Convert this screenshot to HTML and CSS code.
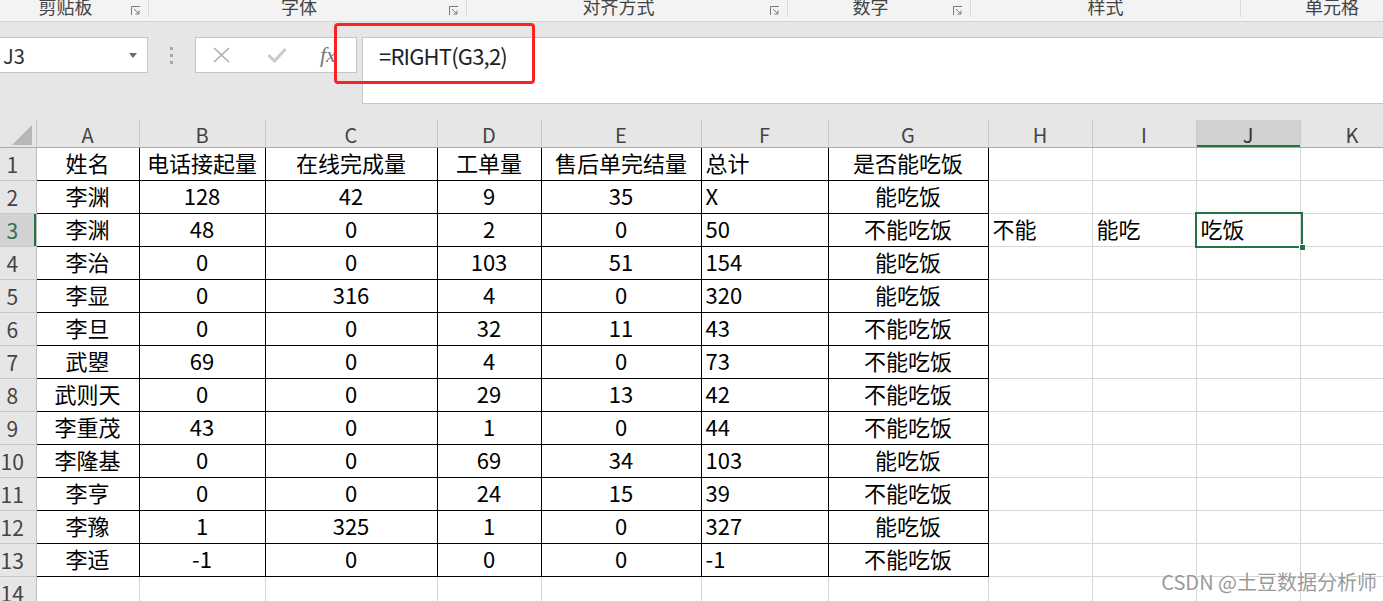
FILE: index.html
```html
<!DOCTYPE html>
<html lang="zh-CN">
<head>
    <meta charset="UTF-8">
    <title>RIGHT函数</title>
    <link rel="stylesheet" href="styles.css">
</head>
<body>
    <!-- 功能区底部的分组标题 -->
    <div class="ribbon">
        <div class="group g1"><span class="glabel">剪贴板</span><svg class="launcher" width="9" height="9"><path d="M0.5 9V0.5H9" /><path d="M3 3L8 8M8 4.5V8H4.5" /></svg></div>
        <div class="group g2"><span class="glabel">字体</span><svg class="launcher" width="9" height="9"><path d="M0.5 9V0.5H9" /><path d="M3 3L8 8M8 4.5V8H4.5" /></svg></div>
        <div class="group g3"><span class="glabel">对齐方式</span><svg class="launcher" width="9" height="9"><path d="M0.5 9V0.5H9" /><path d="M3 3L8 8M8 4.5V8H4.5" /></svg></div>
        <div class="group g4"><span class="glabel">数字</span><svg class="launcher" width="9" height="9"><path d="M0.5 9V0.5H9" /><path d="M3 3L8 8M8 4.5V8H4.5" /></svg></div>
        <div class="group g5"><span class="glabel">样式</span></div>
        <div class="group g6"><span class="glabel">单元格</span></div>
    </div>

    <!-- 名称框 + 编辑栏 -->
    <div class="fbar">
        <div class="namebox"><span>J3</span><svg width="8" height="5"><path d="M0 0H8L4 5Z" fill="#6b6b6b" /></svg></div>
        <div class="grip"><i></i><i></i><i></i></div>
        <div class="fnbox">
            <svg class="ico-x" width="17" height="16"><path d="M1 1L16 15M16 1L1 15" /></svg>
            <svg class="ico-ok" width="20" height="16"><path d="M1.5 8L7.5 14L18.5 2" /></svg>
            <span class="fx">fx</span>
        </div>
        <div class="finput">=RIGHT(G3,2)</div>
        <div class="mark"></div>
    </div>

    <div class="sheet">
        <table class="grid">
            <colgroup>
                <col class="w-rh"><col class="w-a"><col class="w-b"><col class="w-c"><col class="w-d"><col class="w-e"><col class="w-f"><col class="w-g"><col class="w-h"><col class="w-h"><col class="w-h"><col class="w-h">
            </colgroup>
            <thead>
                <tr>
                    <th class="corner"><svg width="36" height="26"><path d="M12 24L32 4V24Z" fill="#b7b7b7" /></svg></th>
                    <th class="ch">A</th><th class="ch">B</th><th class="ch">C</th><th class="ch">D</th><th class="ch">E</th><th class="ch">F</th><th class="ch">G</th><th class="ch">H</th><th class="ch">I</th><th class="ch on">J</th><th class="ch">K</th>
                </tr>
            </thead>
            <tbody>
                <tr><th class="rh">1</th><td class="t">姓名</td><td class="t">电话接起量</td><td class="t">在线完成量</td><td class="t">工单量</td><td class="t">售后单完结量</td><td class="t">总计</td><td class="t">是否能吃饭</td><td></td><td></td><td></td><td></td></tr>
                <tr><th class="rh">2</th><td class="t">李渊</td><td class="t">128</td><td class="t">42</td><td class="t">9</td><td class="t">35</td><td class="t">X</td><td class="t">能吃饭</td><td></td><td></td><td></td><td></td></tr>
                <tr><th class="rh on">3</th><td class="t">李渊</td><td class="t">48</td><td class="t">0</td><td class="t">2</td><td class="t">0</td><td class="t">50</td><td class="t">不能吃饭</td><td class="l">不能</td><td class="l">能吃</td><td class="l active">吃饭<div class="sel"><span class="handle"></span></div></td><td></td></tr>
                <tr><th class="rh">4</th><td class="t">李治</td><td class="t">0</td><td class="t">0</td><td class="t">103</td><td class="t">51</td><td class="t">154</td><td class="t">能吃饭</td><td></td><td></td><td></td><td></td></tr>
                <tr><th class="rh">5</th><td class="t">李显</td><td class="t">0</td><td class="t">316</td><td class="t">4</td><td class="t">0</td><td class="t">320</td><td class="t">能吃饭</td><td></td><td></td><td></td><td></td></tr>
                <tr><th class="rh">6</th><td class="t">李旦</td><td class="t">0</td><td class="t">0</td><td class="t">32</td><td class="t">11</td><td class="t">43</td><td class="t">不能吃饭</td><td></td><td></td><td></td><td></td></tr>
                <tr><th class="rh">7</th><td class="t">武曌</td><td class="t">69</td><td class="t">0</td><td class="t">4</td><td class="t">0</td><td class="t">73</td><td class="t">不能吃饭</td><td></td><td></td><td></td><td></td></tr>
                <tr><th class="rh">8</th><td class="t">武则天</td><td class="t">0</td><td class="t">0</td><td class="t">29</td><td class="t">13</td><td class="t">42</td><td class="t">不能吃饭</td><td></td><td></td><td></td><td></td></tr>
                <tr><th class="rh">9</th><td class="t">李重茂</td><td class="t">43</td><td class="t">0</td><td class="t">1</td><td class="t">0</td><td class="t">44</td><td class="t">不能吃饭</td><td></td><td></td><td></td><td></td></tr>
                <tr><th class="rh">10</th><td class="t">李隆基</td><td class="t">0</td><td class="t">0</td><td class="t">69</td><td class="t">34</td><td class="t">103</td><td class="t">能吃饭</td><td></td><td></td><td></td><td></td></tr>
                <tr><th class="rh">11</th><td class="t">李亨</td><td class="t">0</td><td class="t">0</td><td class="t">24</td><td class="t">15</td><td class="t">39</td><td class="t">不能吃饭</td><td></td><td></td><td></td><td></td></tr>
                <tr><th class="rh">12</th><td class="t">李豫</td><td class="t">1</td><td class="t">325</td><td class="t">1</td><td class="t">0</td><td class="t">327</td><td class="t">能吃饭</td><td></td><td></td><td></td><td></td></tr>
                <tr><th class="rh">13</th><td class="t">李适</td><td class="t">-1</td><td class="t">0</td><td class="t">0</td><td class="t">0</td><td class="t">-1</td><td class="t">不能吃饭</td><td></td><td></td><td></td><td></td></tr>
                <tr><th class="rh">14</th><td></td><td></td><td></td><td></td><td></td><td></td><td></td><td></td><td></td><td></td><td></td></tr>
            </tbody>
        </table>
    </div>

    <div class="watermark">CSDN @土豆数据分析师</div>
</body>
</html>
```

FILE: styles.css
```css
*{
    box-sizing: border-box;
}
body{
    margin: 0;
    width: 1383px;
    height: 601px;
    overflow: hidden;
    position: relative;
    background-color: #e6e6e6;
    font-family: "Noto Sans CJK SC", sans-serif;
}

/* 功能区 */
.ribbon{
    display: flex;
    height: 22px;
    background-color: #f3f3f3;
    border-bottom: 1px solid #d4d4d4;
    color: #444;
    font-size: 18px;
    line-height: 12px;
    overflow: hidden;
}
.group{
    display: flex;
    align-items: flex-start;
    height: 17px;
    border-right: 1px solid #d9d9d9;
}
.g1{ width: 149px; }
.g2{ width: 318px; }
.g3{ width: 321px; }
.g4{ width: 183px; }
.g5{ width: 270px; }
.g6{ flex: 1; border-right: none; padding-left: 40px; }
.glabel{
    flex: 1;
    text-align: center;
    white-space: nowrap;
}
.launcher{
    margin: 6px 8px 0 0;
    fill: none;
    stroke: #7a7a7a;
    stroke-width: 1;
}

/* 编辑栏 */
.fbar{
    position: relative;
    display: flex;
    align-items: flex-start;
    height: 98px;
    padding-top: 15px;
}
.namebox{
    width: 148px;
    height: 36px;
    background-color: #fff;
    border: 1px solid #c6c6c6;
    border-left: none;
    display: flex;
    align-items: center;
    justify-content: space-between;
    padding: 0 10px 0 3px;
    font-size: 20px;
    color: #333;
}
.grip{
    width: 47px;
    height: 36px;
    display: flex;
    flex-direction: column;
    align-items: center;
    justify-content: center;
    gap: 4px;
}
.grip i{
    width: 3px;
    height: 3px;
    background-color: #a9a9a9;
}
.fnbox{
    width: 162px;
    height: 36px;
    background-color: #fff;
    border: 1px solid #c6c6c6;
    display: flex;
    align-items: center;
    padding-left: 17px;
}
.ico-x{
    stroke: #adadad;
    stroke-width: 1.6;
}
.ico-ok{
    margin-left: 37px;
    fill: none;
    stroke: #c9c9c9;
    stroke-width: 3;
}
.fx{
    margin-left: 33px;
    font-family: "Liberation Serif", serif;
    font-style: italic;
    font-size: 22px;
    color: #777;
}
.finput{
    flex: 1;
    margin-left: 5px;
    height: 67px;
    background-color: #fff;
    border: 1px solid #c6c6c6;
    border-right: none;
    padding: 2px 0 0 16px;
    font-size: 22px;
    letter-spacing: -0.8px;
    line-height: 30px;
    color: #222;
}
.mark{
    position: absolute;
    left: 334px;
    top: 1px;
    width: 201px;
    height: 61px;
    border: 3px solid #fd2222;
    border-radius: 4px;
}

/* 表格 */
.grid{
    border-collapse: collapse;
    table-layout: fixed;
    width: 1404px;
}
.w-rh{ width: 36px; }
.w-a{ width: 103px; }
.w-b{ width: 126px; }
.w-c{ width: 172px; }
.w-d{ width: 104px; }
.w-e{ width: 160px; }
.w-f{ width: 127px; }
.w-g{ width: 160px; }
.w-h{ width: 104px; }

.grid thead tr{
    height: 27px;
}
.grid th{
    padding: 0;
    font-weight: normal;
    color: #444;
    background-color: #e6e6e6;
}
.corner{
    border-right: 1px solid #c6c6c6;
    border-bottom: 1px solid #ababab;
    line-height: 0;
    vertical-align: bottom;
}
.ch{
    border-left: 1px solid #c8c8c8;
    border-right: 1px solid #c8c8c8;
    border-bottom: 1px solid #ababab;
    font-size: 20px;
    line-height: 24px;
    vertical-align: bottom;
}
.ch.on{
    background-color: #d2d2d2;
    box-shadow: inset 0 -2px #217346;
    color: #333;
}
.rh{
    border-right: 1px solid #bdbdbd;
    border-bottom: 1px solid #c8c8c8;
    text-align: center;
    padding: 0 11px 2px 0 !important;
    font-size: 21px;
    line-height: 28px;
    vertical-align: bottom;
}
.rh.on{
    background-color: #d2d2d2;
    color: #2f6e52;
    box-shadow: inset -2px 0 #217346;
}
.grid tbody tr{
    height: 33px;
}
.grid td{
    border: 1px solid #d6d6d6;
    background-color: #fff;
    padding: 0 4px 4px;
    font-size: 22px;
    line-height: 28px;
    color: #000;
    white-space: nowrap;
    overflow: hidden;
    text-align: left;
}
.grid td.t{
    border: 1px solid #000;
    text-align: center;
}
.grid td.t:nth-child(7){
    text-align: left;
}
.grid td.active{
    position: relative;
    overflow: visible;
}
.sel{
    position: absolute;
    left: -2px;
    top: -2px;
    right: -3px;
    bottom: -2px;
    border: 2px solid #217346;
}
.handle{
    position: absolute;
    right: -5px;
    bottom: -5px;
    width: 7px;
    height: 7px;
    background-color: #217346;
    border: 1px solid #fff;
}

.watermark{
    position: absolute;
    right: 6px;
    top: 567px;
    font-size: 20px;
    color: #9a9a9a;
    text-shadow: 0 0 2px #fff, 0 0 2px #fff;
}
```
